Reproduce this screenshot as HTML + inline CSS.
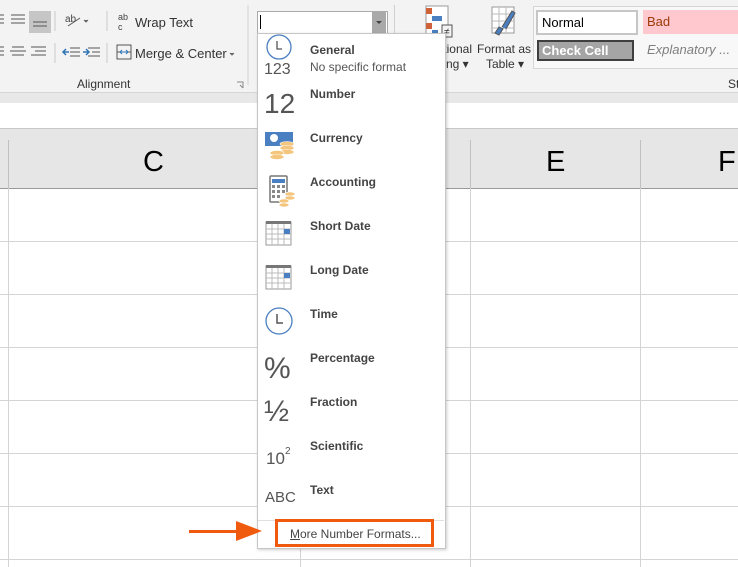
<!DOCTYPE html>
<html><head><style>
body{margin:0;width:738px;height:567px;overflow:hidden;position:relative;font-family:"Liberation Sans",sans-serif;background:#fff}
.a{position:absolute}
.t{font-size:12px;color:#333}
.mi{position:absolute;left:310px;font-size:12px;font-weight:bold;color:#444}
.hl{position:absolute;left:0;width:738px;height:1px;background:#d4d4d4}
.vl{position:absolute;top:188px;height:379px;width:1px;background:#d4d4d4}
</style></head><body>
<!-- ribbon -->
<div class="a" style="left:0;top:0;width:738px;height:92px;background:#f3f3f3"></div>
<div class="a" style="left:0;top:92px;width:738px;height:10px;background:#e8e8e8;border-top:1px solid #d6d6d6"></div>
<div class="a" style="left:29px;top:11px;width:22px;height:22px;background:#c6c6c6"></div>
<svg class="a" style="left:0;top:0" width="260" height="92">
<g stroke="#555" stroke-width="1" fill="none"><path d="M0 15h4M0 19h4M0 23h4M11 15h14M11 19h14M11 23h14M33 22h14M33 26h14"/>
<path d="M0 47h4M0 51h4M0 55h4M12 47h12M10 51h16M12 55h12M31 47h15M35 51h11M31 55h15"/>
<path d="M70 48h10M70 52h10M70 56h10M88 48h12M92 52h8M88 56h12M117 45h14v14h-14zM117 52h14"/></g>
<path d="M55 11v20M107 11v20M55 43v20M107 43v20" stroke="#c8c8c8"/>
<path d="M63 52h6M66 49l-3 3 3 3M83 52h6M86 49l3 3-3 3" stroke="#2e75b6" stroke-width="1.5" fill="none"/>
<path d="M120 52h8M120 52l2-2M120 52l2 2M128 52l-2-2M128 52l-2 2" stroke="#2e75b6" fill="none"/>
<text x="65" y="22" font-size="10" fill="#444" font-family="Liberation Sans">ab</text>
<path d="M68 26l12-8" stroke="#555" fill="none"/>
<text x="118" y="20" font-size="9" fill="#444" font-family="Liberation Sans">ab</text><text x="118" y="30" font-size="9" fill="#444" font-family="Liberation Sans">c</text>
<path d="M84 20l2 2 2-2M230 53l2 2 2-2" stroke="#666" fill="#666"/>
<path d="M237 82h6v6M240 85l3 3" stroke="#888" fill="none"/>
<path d="M248 5v80" stroke="#d0d0d0"/>
</svg>
<div class="a t" style="left:135px;top:15px;font-size:13px">Wrap Text</div>
<div class="a t" style="left:135px;top:46px;font-size:13px">Merge &amp; Center</div>
<div class="a t" style="left:77px;top:77px">Alignment</div>
<div class="a" style="left:257px;top:11px;width:129px;height:21px;border:1px solid #aaa;background:#fff"></div>
<div class="a" style="left:260px;top:15px;width:1px;height:14px;background:#000"></div>
<div class="a" style="left:372px;top:12px;width:14px;height:21px;background:#a9a9a9"></div>
<div class="a" style="left:376px;top:21px;border:3px solid transparent;border-top:3px solid #444"></div>
<div class="a" style="left:394px;top:5px;width:1px;height:78px;background:#d0d0d0"></div>
<svg class="a" style="left:420px;top:5px" width="120" height="36">
<g stroke="#999" fill="#fff"><rect x="6" y="1" width="22" height="30"/><rect x="72" y="2" width="22" height="26"/></g>
<path d="M72 9h22M72 16h22M72 23h22M79 2v26M86 2v26" stroke="#bbb"/>
<rect x="6" y="3" width="6" height="6" fill="#d0623a"/><rect x="12" y="11" width="10" height="5" fill="#4a7fc1"/><rect x="6" y="18" width="6" height="6" fill="#d0623a"/><rect x="12" y="25" width="6" height="5" fill="#4a7fc1"/>
<rect x="22" y="20" width="10" height="12" fill="#f3f3f3" stroke="#555"/><text x="24" y="30" font-size="10" fill="#333">≠</text>
<path d="M75 28l4-6 4 2-4 6zM82 22l10-16 3 2-9 16" fill="#4a7fc1" stroke="#555"/>
</svg>
<div class="a t" style="left:424px;top:42px;font-size:12px;width:48px;overflow:hidden;text-align:right;direction:rtl">Conditional</div>
<div class="a t" style="left:440px;top:57px;font-size:12px">ting ▾</div>
<div class="a t" style="left:477px;top:42px;font-size:12px">Format as</div>
<div class="a t" style="left:486px;top:57px;font-size:12px">Table ▾</div>
<div class="a" style="left:533px;top:6px;width:205px;height:61px;border:1px solid #d6d6d6;background:#f8f8f8"></div>
<div class="a" style="left:536px;top:10px;border:2px solid #c6c6c6;background:#fff;font-size:13px;color:#000;line-height:21px;padding-left:4px;box-sizing:border-box;width:102px;height:25px">Normal</div>
<div class="a" style="left:643px;top:10px;width:95px;height:24px;background:#ffc7ce;color:#9c3a06;font-size:13px;line-height:24px;padding-left:4px">Bad</div>
<div class="a" style="left:537px;top:40px;width:97px;height:21px;background:#a5a5a5;border:2px double #3f3f3f;color:#fff;font-weight:bold;font-size:13px;line-height:17px;padding-left:3px;box-sizing:border-box">Check Cell</div>
<div class="a" style="left:647px;top:42px;color:#7f7f7f;font-style:italic;font-size:13px">Explanatory ...</div>
<div class="a t" style="left:728px;top:77px">St</div>
<div class="a" style="left:0;top:103px;width:738px;height:25px;background:#fff;border-bottom:1px solid #c8c8c8"></div>
<div class="a" style="left:0;top:129px;width:738px;height:59px;background:#e6e6e6;border-bottom:1px solid #999"></div>
<div class="a" style="left:8px;top:140px;width:1px;height:48px;background:#c0c0c0"></div>
<div class="a" style="left:470px;top:140px;width:1px;height:48px;background:#c0c0c0"></div>
<div class="a" style="left:640px;top:140px;width:1px;height:48px;background:#c0c0c0"></div>
<div class="a" style="left:143px;top:146px;font-size:29px;color:#000">C</div>
<div class="a" style="left:546px;top:146px;font-size:29px;color:#000">E</div>
<div class="a" style="left:718px;top:146px;font-size:29px;color:#000">F</div>
<div class="hl" style="top:241px"></div><div class="hl" style="top:294px"></div><div class="hl" style="top:347px"></div><div class="hl" style="top:400px"></div><div class="hl" style="top:453px"></div><div class="hl" style="top:506px"></div><div class="hl" style="top:559px"></div>
<div class="vl" style="left:8px"></div><div class="vl" style="left:300px"></div><div class="vl" style="left:470px"></div><div class="vl" style="left:640px"></div>
<div class="a" style="left:257px;top:33px;width:187px;height:514px;background:#fff;border:1px solid #c6c6c6;box-shadow:1px 1px 3px rgba(0,0,0,.2)"></div>
<svg class="a" style="left:258px;top:34px" width="50" height="480">
<circle cx="21" cy="13" r="12" fill="none" stroke="#4a7fc1" stroke-width="1.3"/><path d="M19 7v8h5" stroke="#555" fill="none" stroke-width="1.3"/>
<text x="6" y="40" font-size="16" fill="#555" font-family="Liberation Sans">123</text>
<text x="6" y="79" font-size="28" fill="#555" font-family="Liberation Sans">12</text>
<rect x="7" y="98" width="28" height="14" fill="#4a7fc1"/><circle cx="16" cy="104" r="4" fill="#fff"/>
<g fill="#f4c57c" stroke="#fff" stroke-width=".6"><ellipse cx="29" cy="110" rx="7" ry="2.5"/><ellipse cx="29" cy="114" rx="7" ry="2.5"/><ellipse cx="29" cy="118" rx="7" ry="2.5"/><ellipse cx="19" cy="119" rx="7" ry="2.5"/><ellipse cx="19" cy="123" rx="7" ry="2.5"/></g>
<rect x="12" y="142" width="17" height="26" fill="#fff" stroke="#777" stroke-width="1.5" rx="1"/><rect x="14" y="145" width="13" height="4" fill="#4a7fc1"/>
<g fill="#888"><rect x="14" y="151" width="3" height="3"/><rect x="19" y="151" width="3" height="3"/><rect x="24" y="151" width="3" height="3"/><rect x="14" y="156" width="3" height="3"/><rect x="19" y="156" width="3" height="3"/><rect x="24" y="156" width="3" height="3"/><rect x="14" y="161" width="3" height="3"/><rect x="19" y="161" width="3" height="3"/></g>
<g fill="#f4c57c" stroke="#fff" stroke-width=".6"><ellipse cx="32" cy="160" rx="5" ry="2"/><ellipse cx="32" cy="164" rx="5" ry="2"/><ellipse cx="26" cy="167" rx="5" ry="2"/><ellipse cx="26" cy="171" rx="5" ry="2"/></g>
<g id="cal"><rect x="8" y="188" width="25" height="23" fill="#fff" stroke="#999"/><rect x="8" y="187" width="25" height="3" fill="#777"/><path d="M8 195h25M8 200h25M8 205h25M14 190v21M20 190v21M26 190v21" stroke="#bbb"/><rect x="26" y="195" width="6" height="5" fill="#4a7fc1"/></g>
<use href="#cal" y="44"/>
<circle cx="21" cy="287" r="13" fill="none" stroke="#4a7fc1" stroke-width="1.3"/><path d="M19 280v9h6" stroke="#555" fill="none" stroke-width="1.5"/>
<text x="6" y="344" font-size="30" fill="#555" font-family="Liberation Sans">%</text>
<text x="6" y="387" font-size="30" fill="#555" font-family="Liberation Sans">½</text>
<text x="8" y="430" font-size="17" fill="#555" font-family="Liberation Sans">10</text><text x="27" y="420" font-size="10" fill="#555" font-family="Liberation Sans">2</text>
<text x="7" y="468" font-size="15" fill="#555" font-family="Liberation Sans">ABC</text>
</svg>
<div class="mi" style="top:43px">General</div>
<div class="a" style="left:310px;top:60px;font-size:12px;color:#555">No specific format</div>
<div class="mi" style="top:87px">Number</div>
<div class="mi" style="top:131px">Currency</div>
<div class="mi" style="top:175px">Accounting</div>
<div class="mi" style="top:219px">Short Date</div>
<div class="mi" style="top:263px">Long Date</div>
<div class="mi" style="top:307px">Time</div>
<div class="mi" style="top:351px">Percentage</div>
<div class="mi" style="top:395px">Fraction</div>
<div class="mi" style="top:439px">Scientific</div>
<div class="mi" style="top:483px">Text</div>
<div class="a" style="left:258px;top:520px;width:186px;height:1px;background:#e0e0e0"></div>
<div class="a" style="left:275px;top:519px;width:153px;height:22px;border:3px solid #f05a0f"></div>
<div class="a" style="left:290px;top:527px;font-size:12px;color:#444"><u>M</u>ore Number Formats...</div>
<div class="a" style="left:189px;top:530px;width:50px;height:3px;background:#f05a0f"></div>
<div class="a" style="left:236px;top:521px;border-left:26px solid #f05a0f;border-top:10px solid transparent;border-bottom:10px solid transparent;width:0;height:0"></div>
</body></html>
